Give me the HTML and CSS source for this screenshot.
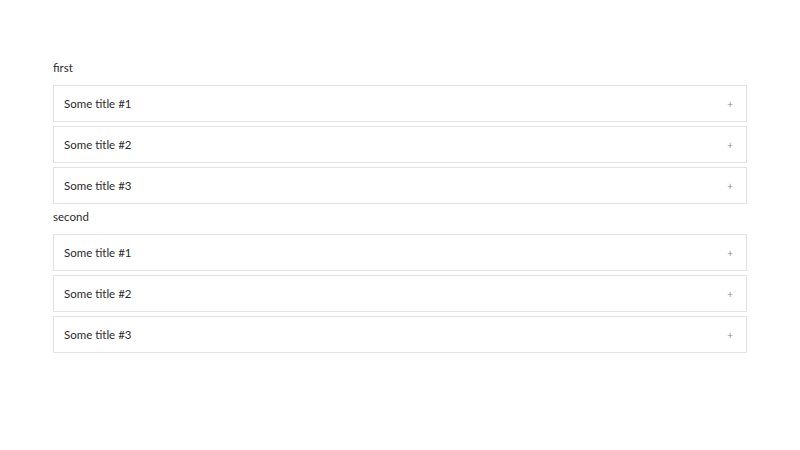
FILE: index.html
```
<!DOCTYPE html>
<html>
<head>
<meta charset="utf-8">
<link rel="stylesheet" href="styles.css">
</head>
<body>
<div class="page">
  <section class="group">
    <div class="label">first</div>
    <div class="item"><span class="title">Some title #1</span><span class="plus">+</span></div>
    <div class="item"><span class="title">Some title #2</span><span class="plus">+</span></div>
    <div class="item"><span class="title">Some title #3</span><span class="plus">+</span></div>
  </section>
  <section class="group">
    <div class="label">second</div>
    <div class="item"><span class="title">Some title #1</span><span class="plus">+</span></div>
    <div class="item"><span class="title">Some title #2</span><span class="plus">+</span></div>
    <div class="item"><span class="title">Some title #3</span><span class="plus">+</span></div>
  </section>
</div>
</body>
</html>
```
FILE: styles.css
```
html, body {
  margin: 0;
  padding: 0;
  background: #fff;
}
body {
  font-family: "Lato", "Open Sans", sans-serif;
  font-size: 11.5px;
  color: #2b2b2b;
}
.page {
  padding: 59px 53px 0 53px;
}
.group {
  display: flex;
  flex-direction: column;
}
.label {
  line-height: 17px;
  height: 17px;
  margin-bottom: 9px;
}
.item {
  box-sizing: border-box;
  height: 37px;
  border: 1px solid #e3e3e3;
  display: flex;
  align-items: center;
  justify-content: space-between;
  padding: 0 13px 0 10px;
  margin-bottom: 4px;
}
.plus {
  color: #888;
  font-family: "Open Sans", sans-serif;
  font-size: 10px;
  line-height: 10px;
}
```
